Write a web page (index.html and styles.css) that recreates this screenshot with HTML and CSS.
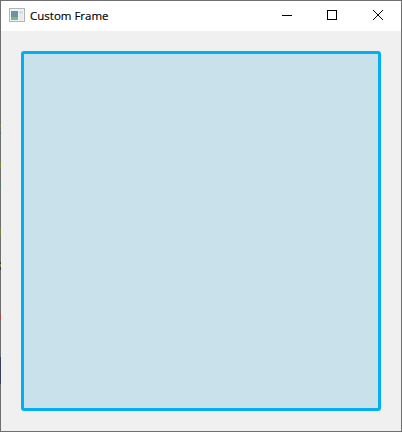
FILE: index.html
```html
<!DOCTYPE html>
<html lang="en">
<head>
<meta charset="utf-8">
<title>Custom Frame</title>
<link rel="stylesheet" href="styles.css">
</head>
<body>
<div class="window">
  <header class="titlebar">
    <svg class="app-icon" width="16" height="14" viewBox="0 0 16 14" aria-hidden="true">
      <rect x="0.5" y="0.5" width="15" height="13" fill="#f2f2f2" stroke="#b4b4b4"/>
      <rect x="2" y="3" width="7" height="9" fill="#5f9a98"/>
      <rect x="2" y="3" width="7" height="3" fill="#6f90ab"/>
      <rect x="2" y="9" width="7" height="3" fill="#7fb48f"/>
      <rect x="10" y="3" width="4" height="3" fill="#d5dee3"/>
      <rect x="10" y="7" width="4" height="5" fill="#e8ebec"/>
    </svg>
    <span class="title">Custom Frame</span>
    <div class="controls">
      <button class="control control-min" aria-label="Minimize">
        <svg width="10" height="10" viewBox="0 0 10 10"><path d="M0 5.5H10" stroke="#000" fill="none"/></svg>
      </button>
      <button class="control" aria-label="Maximize">
        <svg width="10" height="10" viewBox="0 0 10 10"><rect x="0.5" y="0.5" width="9" height="9" stroke="#000" fill="none"/></svg>
      </button>
      <button class="control" aria-label="Close">
        <svg width="10" height="10" viewBox="0 0 10 10"><path d="M0 0L10 10M10 0L0 10" stroke="#000" fill="none"/></svg>
      </button>
    </div>
  </header>
  <main class="content">
    <div class="panel"></div>
  </main>
</div>
</body>
</html>
```

FILE: styles.css
```css
* {
  box-sizing: border-box;
}

html,
body {
  margin: 0;
  height: 100%;
}

body {
  font-family: "Open Sans", "Noto Sans", sans-serif;
  overflow: hidden;
}

.window {
  position: relative;
  display: flex;
  flex-direction: column;
  height: 432px;
  width: 402px;
  border: 1px solid #6f6f6f;
  background: #f0f0f0;
}

.window::before {
  content: "";
  position: absolute;
  top: -1px;
  left: -1px;
  width: 1px;
  height: 432px;
  background: linear-gradient(
    to bottom,
    #6f6f6f 124px,
    #7c7c58 124px 127px,
    #6f6f6f 127px 132px,
    #3f6f5f 132px 134px,
    #6f6f6f 134px 162px,
    #80803f 162px 168px,
    #6f6f6f 168px 184px,
    #3f7f70 184px 187px,
    #6f6f6f 187px 229px,
    #80803f 229px 236px,
    #6f6f6f 236px 262px,
    #333a5a 262px 264px,
    #80803f 264px 267px,
    #333a5a 267px 270px,
    #6f6f6f 270px 314px,
    #a05040 314px 320px,
    #6f6f6f 320px 357px,
    #38405a 357px 384px,
    #6f6f6f 384px
  );
}

.titlebar {
  display: flex;
  align-items: center;
  height: 30px;
  flex: none;
  padding: 0 0 2px 8px;
  background: #fff;
}

.app-icon {
  flex: none;
}

.title {
  margin-left: 5px;
  font-size: 11.5px;
  color: #000;
  -webkit-text-stroke: 0.15px #000;
}

.controls {
  display: flex;
  margin-left: auto;
}

.control {
  display: flex;
  align-items: center;
  justify-content: center;
  width: 46px;
  height: 28px;
  padding: 0;
  border: 0;
  background: none;
}

.control-min {
  padding-left: 2px;
}

.content {
  display: flex;
  flex: 1;
  padding: 20px;
}

.panel {
  flex: 1;
  border: 3px solid #00b0f0;
  border-radius: 3px;
  background: #c8e1eb;
}
```
